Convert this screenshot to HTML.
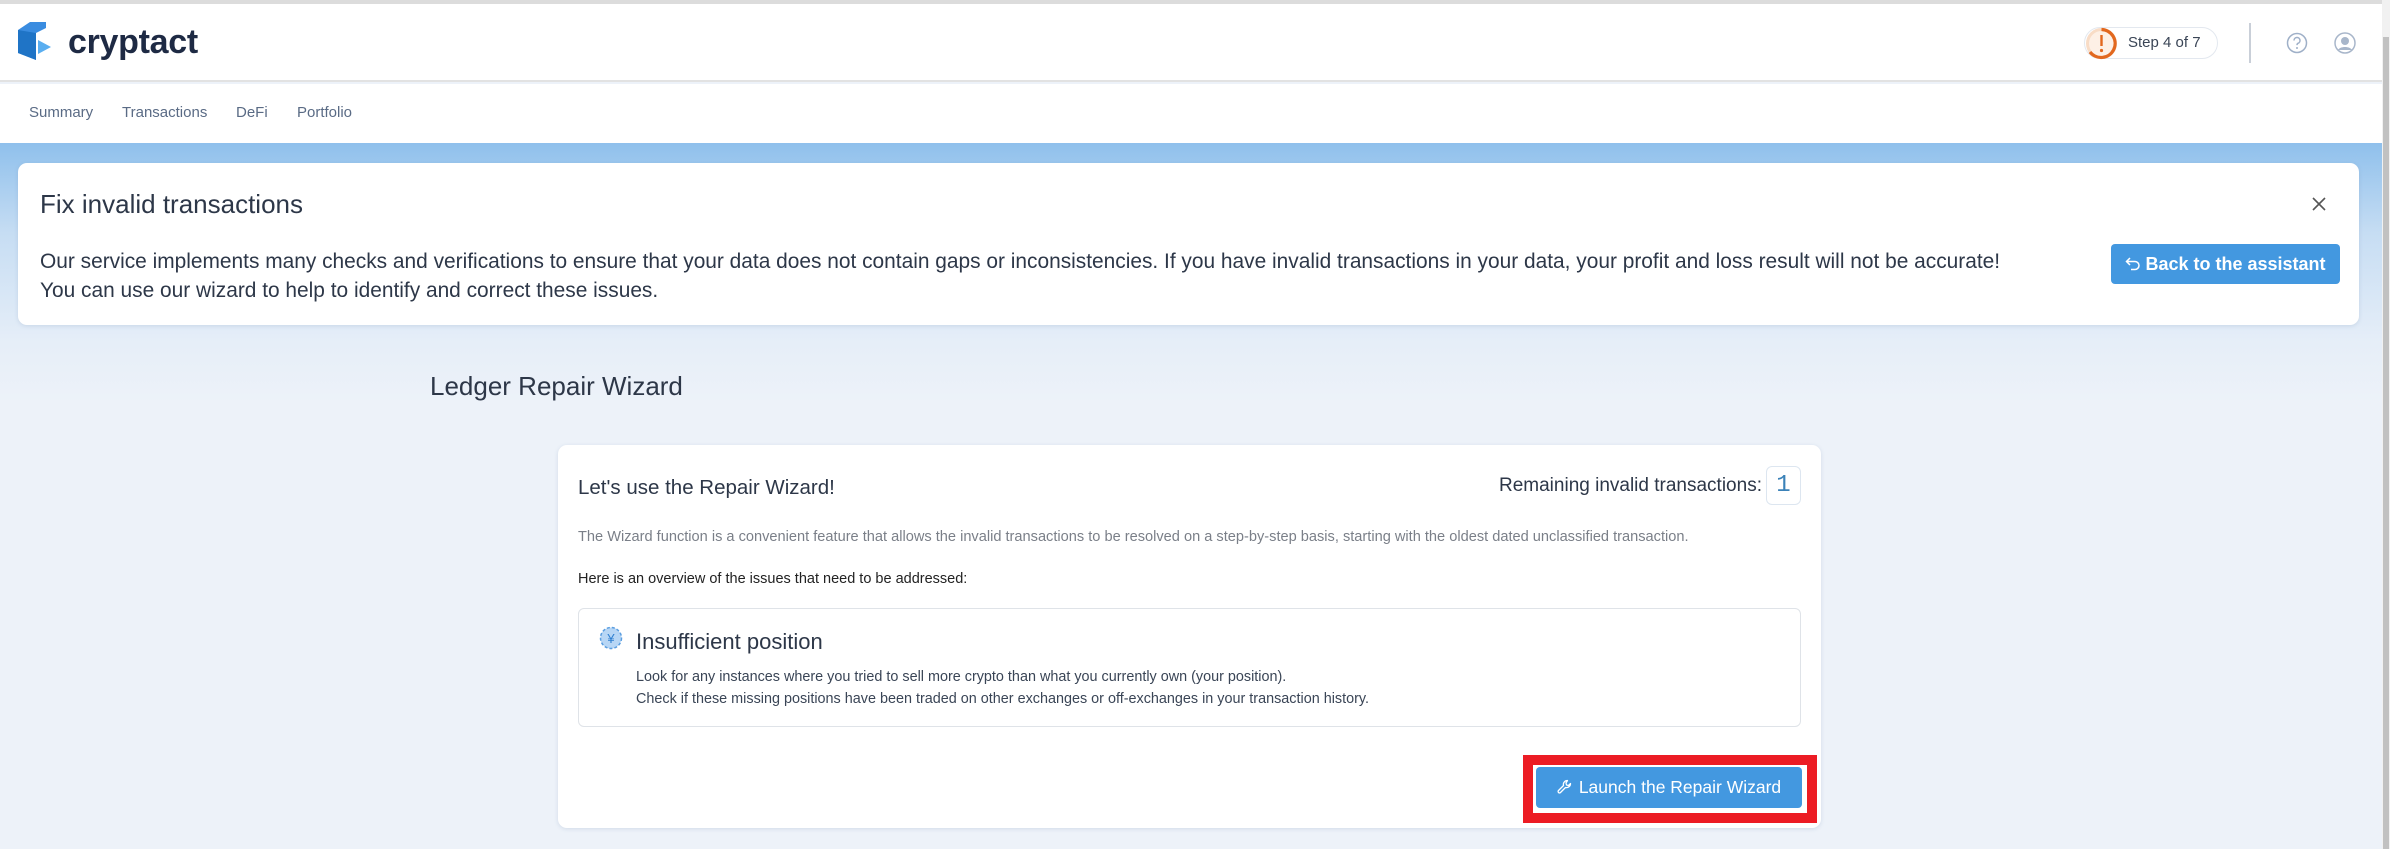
<!DOCTYPE html>
<html><head><meta charset="utf-8">
<style>
*{box-sizing:border-box;margin:0;padding:0}
body{width:2390px;height:849px;overflow:hidden;font-family:"Liberation Sans",sans-serif;color:#2d3748;background:#edf2f9;position:relative}
.abs{position:absolute}
#top{left:0;top:0;width:2382px;height:4px;background:#dcdcdc}
#hdr{left:0;top:4px;width:2382px;height:78px;background:#fff;border-bottom:2px solid #e2e2e2}
#nav{left:0;top:84px;width:2382px;height:59px;background:#fff}
#nav span{position:absolute;top:20px;font-size:15px;color:#5a6b85}
#grad{left:0;top:143px;width:2382px;height:260px;background:linear-gradient(#8fc0ec 0,#c6ddf3 90px,#e6eef8 200px,#edf2f9 260px)}
#sb{left:2382px;top:0;width:8px;height:849px;background:#f1f1f1}
#sbt{left:2383px;top:37px;width:6px;height:812px;background:#c1c1c1}
.card{background:#fff;border-radius:9px;box-shadow:0 1px 4px rgba(100,130,170,.2)}
.btn{background:#4398e0;color:#fff;border-radius:4px;text-align:center;white-space:nowrap}
</style></head><body>
<div class="abs" id="top"></div>
<div class="abs" id="hdr"></div>
<svg class="abs" style="left:16px;top:20px" width="36" height="44" viewBox="0 0 36 44">
<polygon points="14,2 30,2 30,8 20,13 20,40 2,33 2,10" fill="#3a8ce0"/>
<polygon points="2,10 20,13 20,40 2,33" fill="#1f74c6"/>
<polygon points="22,20 35,27 22,34" fill="#5aaef0"/>
</svg>
<div class="abs" style="left:68px;top:23px;font-size:34px;font-weight:bold;color:#1e2a44;letter-spacing:-0.3px">cryptact</div>
<div class="abs" style="left:2084px;top:27px;width:134px;height:32px;border:1px solid #e3e8ef;border-radius:16px;background:#fff"></div>
<svg class="abs" style="left:2085px;top:27px" width="33" height="33" viewBox="0 0 33 33">
<circle cx="16.5" cy="16.5" r="14" fill="#fdf0e6" stroke="#f8dcc6" stroke-width="3"/>
<path d="M16.5 2.5 A14 14 0 1 1 5 25" fill="none" stroke="#e2681f" stroke-width="3.2"/>
<rect x="15.3" y="8" width="2.4" height="11" fill="#e2681f"/><circle cx="16.5" cy="23.5" r="1.6" fill="#e2681f"/>
</svg>
<div class="abs" style="left:2128px;top:34px;font-size:15px;color:#3a4556">Step 4 of 7</div>
<div class="abs" style="left:2249px;top:23px;width:2px;height:40px;background:#c9cfd8"></div>
<svg class="abs" style="left:2286px;top:32px" width="22" height="22" viewBox="0 0 22 22"><circle cx="11" cy="11" r="9.5" fill="none" stroke="#9fb0c8" stroke-width="1.5"/><path d="M8 8.5a3 3 0 1 1 4 2.8c-.8.4-1 .9-1 1.8" fill="none" stroke="#9fb0c8" stroke-width="1.5"/><circle cx="11" cy="16" r="1" fill="#9fb0c8"/></svg>
<svg class="abs" style="left:2334px;top:32px" width="22" height="22" viewBox="0 0 22 22"><circle cx="11" cy="11" r="10" fill="#fff" stroke="#a8b6ca" stroke-width="1.5"/><circle cx="11" cy="9" r="4" fill="#a8b6ca"/><path d="M4 18c2-4 12-4 14 0" fill="#a8b6ca"/></svg>
<div class="abs" id="nav"><span style="left:29px">Summary</span><span style="left:122px">Transactions</span><span style="left:236px">DeFi</span><span style="left:297px">Portfolio</span></div>
<div class="abs" id="grad"></div>
<div class="abs" id="sb"></div><div class="abs" id="sbt"></div>

<div class="abs card" style="left:18px;top:163px;width:2341px;height:162px"></div>
<div class="abs" style="left:40px;top:189px;font-size:26px;color:#2d3748">Fix invalid transactions</div>
<div class="abs" style="left:40px;top:247px;font-size:20.9px;line-height:29px;color:#2d3748;white-space:nowrap">Our service implements many checks and verifications to ensure that your data does not contain gaps or inconsistencies. If you have invalid transactions in your data, your profit and loss result will not be accurate!<br>You can use our wizard to help to identify and correct these issues.</div>
<svg class="abs" style="left:2311px;top:196px" width="16" height="16" viewBox="0 0 16 16"><path d="M2 2L14 14M14 2L2 14" stroke="#555" stroke-width="1.6"/></svg>
<div class="abs btn" style="left:2111px;top:244px;width:229px;height:40px;font-size:18px;line-height:40px;font-weight:bold"><svg width="16" height="14" viewBox="0 0 16 14" style="vertical-align:-1px;margin-right:4px"><path d="M5 1L1.5 4.5 5 8M1.5 4.5H10a4 4 0 0 1 0 8H6" fill="none" stroke="#fff" stroke-width="1.5"/></svg>Back to the assistant</div>

<div class="abs" style="left:430px;top:371px;font-size:26px;color:#2d3748">Ledger Repair Wizard</div>

<div class="abs card" style="left:558px;top:445px;width:1263px;height:383px"></div>
<div class="abs" style="left:578px;top:476px;font-size:20.5px;color:#2d3748">Let's use the Repair Wizard!</div>
<div class="abs" style="left:1499px;top:475px;font-size:19px;color:#2d3748">Remaining invalid transactions:</div>
<div class="abs" style="left:1766px;top:466px;width:35px;height:39px;border:1px solid #dde6f0;border-radius:6px;font-size:24px;color:#3b82b8;text-align:center;line-height:37px;font-family:'Liberation Mono',monospace">1</div>
<div class="abs" style="left:578px;top:529px;font-size:14.6px;color:#7a7f88">The Wizard function is a convenient feature that allows the invalid transactions to be resolved on a step-by-step basis, starting with the oldest dated unclassified transaction.</div>
<div class="abs" style="left:578px;top:571px;font-size:14.5px;color:#222">Here is an overview of the issues that need to be addressed:</div>
<div class="abs" style="left:578px;top:608px;width:1223px;height:119px;border:1px solid #dfe3e8;border-radius:6px;background:#fff"></div>
<svg class="abs" style="left:599px;top:626px" width="24" height="24" viewBox="0 0 24 24"><circle cx="12" cy="12" r="10.5" fill="#b7d6f5" stroke="#5b9ee0" stroke-width="1.5" stroke-dasharray="3 2"/><text x="12" y="17" font-size="13" text-anchor="middle" fill="#2f7fd0" font-family="Liberation Sans">¥</text></svg>
<div class="abs" style="left:636px;top:629px;font-size:22px;color:#2d3748">Insufficient position</div>
<div class="abs" style="left:636px;top:666px;font-size:14.4px;line-height:22px;color:#3a4556">Look for any instances where you tried to sell more crypto than what you currently own (your position).<br>Check if these missing positions have been traded on other exchanges or off-exchanges in your transaction history.</div>
<div class="abs" style="left:1523px;top:755px;width:294px;height:68px;border:10px solid #ec1c24;background:#fff"></div>
<div class="abs btn" style="left:1536px;top:767px;width:266px;height:41px;font-size:17.5px;line-height:41px"><svg width="16" height="16" viewBox="0 0 16 16" style="vertical-align:-2px;margin-right:6px"><path d="M10.5 1.5a4 4 0 0 0-4 5L1.5 11.5a1.4 1.4 0 0 0 2 2l5-5a4 4 0 0 0 5-4l-2 2-2-.5-.5-2z" fill="none" stroke="#fff" stroke-width="1.3" stroke-linejoin="round"/></svg>Launch the Repair Wizard</div>
</body></html>
